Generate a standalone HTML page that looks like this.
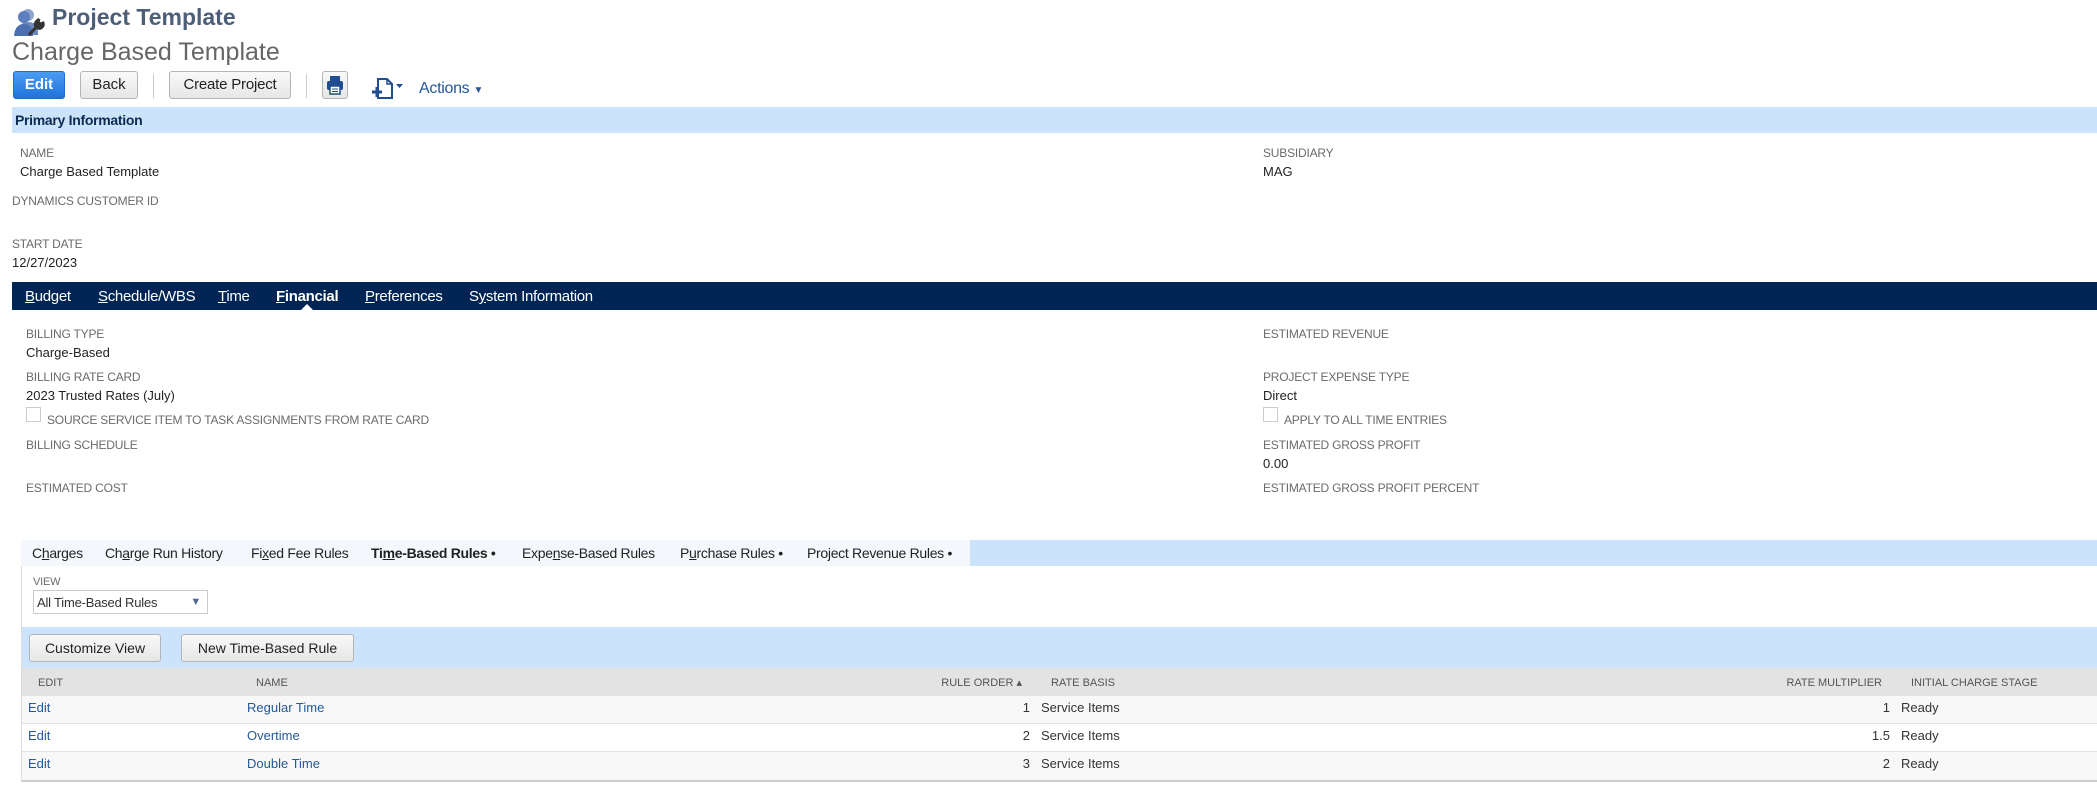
<!DOCTYPE html>
<html><head><meta charset="utf-8"><style>
*{box-sizing:border-box;margin:0;padding:0}
body{width:2097px;height:798px;background:#fff;font-family:"Liberation Sans",Arial,sans-serif;position:relative;overflow:hidden;color:#333}
.a{position:absolute;white-space:nowrap}
.lbl{font-size:12px;color:#6b6b6b;text-transform:uppercase;letter-spacing:-0.2px}
.val{font-size:13px;color:#222}
.btn{position:absolute;height:28px;border:1px solid #b5b5b5;border-radius:3px;background:linear-gradient(#f9f9f9,#e6e6e6);font-size:15px;color:#222;text-align:center;line-height:26px}
.tab{position:absolute;top:282px;height:28px;line-height:29px;color:#fff;font-size:15px;letter-spacing:-0.3px}
.st{position:absolute;top:540px;height:26px;line-height:27px;font-size:14px;color:#222;letter-spacing:-0.3px}
.hd{position:absolute;top:668px;height:28px;line-height:30px;font-size:11px;color:#555}
.row{position:absolute;left:22px;width:2075px;height:28px;border-bottom:1px solid #e2e2e2}
.c{position:absolute;line-height:28px;font-size:13px}
.lk{color:#24589c}
</style></head><body>
<svg class="a" style="left:13px;top:7px" width="32" height="30" viewBox="0 0 32 30">
<circle cx="15" cy="8" r="6" fill="#8fa6cc"/><path d="M4 28 Q5 15 15 15 Q24 15 25 24 L25 28Z" fill="#6d89bb"/>
<circle cx="11" cy="10" r="6" fill="#5d7fbf"/><path d="M1 29 Q2 17 11 17 Q20 17 20 29Z" fill="#4c6fb1"/>
<path d="M16 28 L26 17 M24 14 a4 4 0 1 0 6 2 l-3 1 -2 -2 1 -3z" stroke="#333" stroke-width="3" fill="#333"/>
</svg>
<div class="a" style="left:52px;top:4px;font-size:23px;font-weight:bold;color:#4d5e78">Project Template</div>
<div class="a" style="left:12px;top:38px;font-size:25px;color:#666">Charge Based Template</div>
<div class="btn" style="left:13px;top:71px;width:52px;background:linear-gradient(#4b9cf2,#1f74db);border-color:#1d6ad0;color:#fff;font-weight:bold">Edit</div>
<div class="btn" style="left:80px;top:71px;width:58px">Back</div>
<div class="a" style="left:153px;top:74px;width:1px;height:24px;background:#ccc"></div>
<div class="btn" style="left:169px;top:71px;width:122px;letter-spacing:-0.2px">Create Project</div>
<div class="a" style="left:306px;top:74px;width:1px;height:24px;background:#ccc"></div>
<div class="btn" style="left:322px;top:71px;width:26px"></div>
<svg class="a" style="left:325px;top:75px" width="20" height="20" viewBox="0 0 20 20"><rect x="5" y="1" width="10" height="6" fill="#1f4d8f"/><rect x="2" y="6" width="16" height="9" rx="2" fill="#1f4d8f"/><rect x="5" y="11" width="10" height="8" fill="#fff" stroke="#1f4d8f" stroke-width="1.5"/><path d="M7 14h6M7 16.5h6" stroke="#1f4d8f"/></svg>
<svg class="a" style="left:371px;top:77px" width="34" height="22" viewBox="0 0 34 22"><path d="M7 2h9l5 5v14H7z" fill="none" stroke="#1f4d8f" stroke-width="2"/><path d="M16 2v5h5" fill="none" stroke="#1f4d8f" stroke-width="1.5"/><path d="M1 15h10M6 10v10" stroke="#1f4d8f" stroke-width="3"/><path d="M25 7h7l-3.5 4z" fill="#1f4d8f"/></svg>
<div class="a" style="left:419px;top:80px;font-size:16px;color:#24589c;letter-spacing:-0.3px">Actions <span style="font-size:10px">▼</span></div>
<div class="a" style="left:12px;top:107px;width:2085px;height:26px;background:#cce4fb"></div>
<div class="a" style="left:15px;top:112px;font-size:14px;font-weight:bold;color:#0c2a52;letter-spacing:-0.3px">Primary Information</div>
<div class="a lbl" style="left:20px;top:146px">Name</div>
<div class="a val" style="left:20px;top:164px">Charge Based Template</div>
<div class="a lbl" style="left:1263px;top:146px">Subsidiary</div>
<div class="a val" style="left:1263px;top:164px">MAG</div>
<div class="a lbl" style="left:12px;top:194px">Dynamics Customer ID</div>
<div class="a lbl" style="left:12px;top:237px">Start Date</div>
<div class="a val" style="left:12px;top:255px">12/27/2023</div>
<div class="a" style="left:12px;top:282px;width:2085px;height:28px;background:#002554"></div>
<div class="tab" style="left:25px"><u>B</u>udget</div>
<div class="tab" style="left:98px"><u>S</u>chedule/WBS</div>
<div class="tab" style="left:218px"><u>T</u>ime</div>
<div class="tab" style="left:276px;font-weight:bold"><u>F</u>inancial</div>
<div class="tab" style="left:365px"><u>P</u>references</div>
<div class="tab" style="left:469px">S<u>y</u>stem Information</div>
<div class="a" style="left:301px;top:304px;width:0;height:0;border-left:6px solid transparent;border-right:6px solid transparent;border-bottom:6px solid #fff"></div>
<div class="a lbl" style="left:26px;top:327px">Billing Type</div>
<div class="a val" style="left:26px;top:345px">Charge-Based</div>
<div class="a lbl" style="left:26px;top:370px">Billing Rate Card</div>
<div class="a val" style="left:26px;top:388px">2023 Trusted Rates (July)</div>
<div class="a" style="left:26px;top:407px;width:15px;height:15px;border:1px solid #ccc"></div>
<div class="a lbl" style="left:47px;top:413px">Source service item to task assignments from rate card</div>
<div class="a lbl" style="left:26px;top:438px">Billing Schedule</div>
<div class="a lbl" style="left:26px;top:481px">Estimated Cost</div>
<div class="a lbl" style="left:1263px;top:327px">Estimated Revenue</div>
<div class="a lbl" style="left:1263px;top:370px">Project Expense Type</div>
<div class="a val" style="left:1263px;top:388px">Direct</div>
<div class="a" style="left:1263px;top:407px;width:15px;height:15px;border:1px solid #ccc"></div>
<div class="a lbl" style="left:1284px;top:413px">Apply to all time entries</div>
<div class="a lbl" style="left:1263px;top:438px">Estimated Gross Profit</div>
<div class="a val" style="left:1263px;top:456px">0.00</div>
<div class="a lbl" style="left:1263px;top:481px">Estimated Gross Profit Percent</div>
<div class="a" style="left:21px;top:540px;width:2076px;height:26px;background:#cce4fb"></div>
<div class="a" style="left:21px;top:540px;width:949px;height:26px;background:#f4f8fd"></div>
<div class="st" style="left:32px">C<u>h</u>arges</div>
<div class="st" style="left:105px">Ch<u>a</u>rge Run History</div>
<div class="st" style="left:251px">Fi<u>x</u>ed Fee Rules</div>
<div class="st" style="left:371px;font-weight:bold">Ti<u>m</u>e-Based Rules •</div>
<div class="st" style="left:522px">Expe<u>n</u>se-Based Rules</div>
<div class="st" style="left:680px">P<u>u</u>rchase Rules •</div>
<div class="st" style="left:807px">Project Revenue Rules •</div>
<div class="a" style="left:21px;top:566px;width:1px;height:216px;background:#ddd"></div>
<div class="a lbl" style="left:33px;top:576px;font-size:11px">View</div>
<div class="a" style="left:33px;top:590px;width:175px;height:24px;border:1px solid #ccc;font-size:13px;line-height:23px;padding-left:3px;letter-spacing:-0.2px">All Time-Based Rules<span style="position:absolute;right:6px;top:0;color:#4d6a8f;font-size:11px">▼</span></div>
<div class="a" style="left:22px;top:627px;width:2075px;height:41px;background:#cce4fb"></div>
<div class="btn" style="left:29px;top:634px;width:132px;font-size:14px">Customize View</div>
<div class="btn" style="left:181px;top:634px;width:173px;font-size:14px">New Time-Based Rule</div>
<div class="a" style="left:22px;top:668px;width:2075px;height:28px;background:#e3e3e3"></div>
<div class="hd" style="left:38px">EDIT</div>
<div class="hd" style="left:256px">NAME</div>
<div class="hd" style="left:940px;width:82px;text-align:right">RULE ORDER ▴</div>
<div class="hd" style="left:1051px">RATE BASIS</div>
<div class="hd" style="left:1760px;width:122px;text-align:right">RATE MULTIPLIER</div>
<div class="hd" style="left:1911px">INITIAL CHARGE STAGE</div>
<div class="row" style="top:696px;background:#f8f8f8"></div>
<div class="row" style="top:724px;background:#fff"></div>
<div class="row" style="top:752px;background:#f8f8f8;border-bottom:2px solid #ccc;height:30px"></div>
<div class="c lk" style="left:28px;top:694px">Edit</div><div class="c lk" style="left:247px;top:694px">Regular Time</div><div class="c" style="left:980px;top:694px;width:50px;text-align:right">1</div><div class="c" style="left:1041px;top:694px">Service Items</div><div class="c" style="left:1840px;top:694px;width:50px;text-align:right">1</div><div class="c" style="left:1901px;top:694px">Ready</div>
<div class="c lk" style="left:28px;top:722px">Edit</div><div class="c lk" style="left:247px;top:722px">Overtime</div><div class="c" style="left:980px;top:722px;width:50px;text-align:right">2</div><div class="c" style="left:1041px;top:722px">Service Items</div><div class="c" style="left:1840px;top:722px;width:50px;text-align:right">1.5</div><div class="c" style="left:1901px;top:722px">Ready</div>
<div class="c lk" style="left:28px;top:750px">Edit</div><div class="c lk" style="left:247px;top:750px">Double Time</div><div class="c" style="left:980px;top:750px;width:50px;text-align:right">3</div><div class="c" style="left:1041px;top:750px">Service Items</div><div class="c" style="left:1840px;top:750px;width:50px;text-align:right">2</div><div class="c" style="left:1901px;top:750px">Ready</div>
</body></html>
